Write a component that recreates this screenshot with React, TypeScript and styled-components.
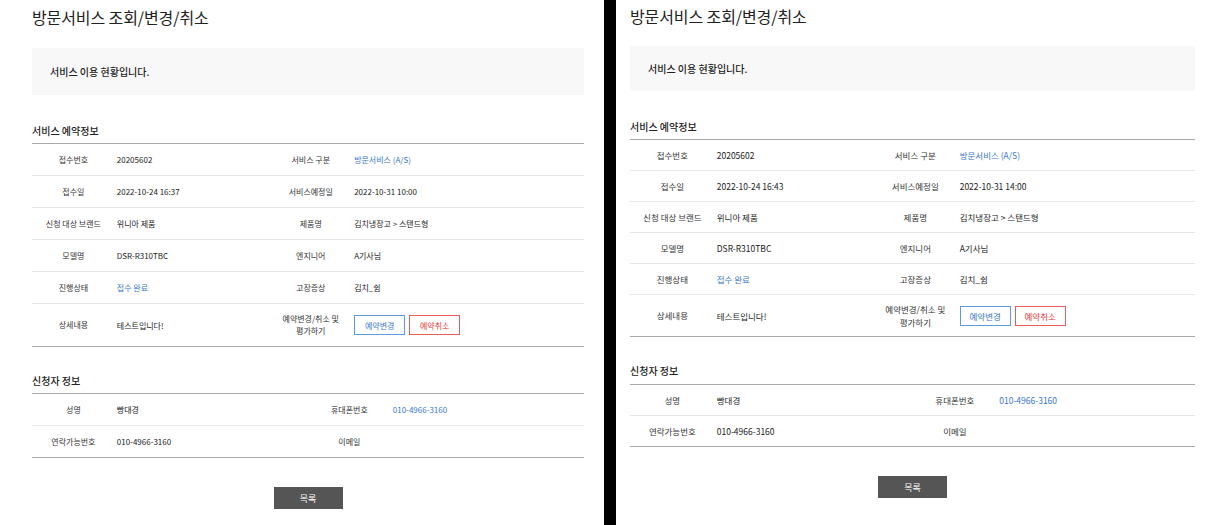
import styled, { createGlobalStyle } from 'styled-components';

const GlobalStyle = createGlobalStyle`
  html, body {
    margin: 0;
    padding: 0;
    background: #fff;
  }
  body {
    font-family: 'Noto Sans CJK KR', 'Noto Sans', sans-serif;
    color: #222;
  }
`;

type Metrics = {
	padL: number;
	padR: number;
	titleH: number;
	noticeTop: number;
	noticeH: number;
	headTop: number;
	headGap: number;
	rowH: number;
	tallH: number;
	head2Top: number;
	head2Gap: number;
	btnTop: number;
	fs: number;
};

const Screen = styled.div`
	display: flex;
	width: 1221px;
	height: 525px;
	overflow: hidden;
`;

const Divider = styled.div`
	width: 12px;
	background: #000;
	flex-shrink: 0;
`;

const Panel = styled.section<{ $w: number; $m: Metrics }>`
	width: ${(p) => p.$w}px;
	flex-shrink: 0;
	padding: 0 ${(p) => p.$m.padR}px 0 ${(p) => p.$m.padL}px;
	box-sizing: border-box;
	display: flex;
	flex-direction: column;
`;

const Title = styled.h2<{ $m: Metrics }>`
	margin: 0;
	height: ${(p) => p.$m.titleH}px;
	line-height: ${(p) => p.$m.titleH}px;
	font-size: 16px;
	font-weight: 400;
	color: #222;
	letter-spacing: -0.1px;
`;

const Notice = styled.div<{ $m: Metrics }>`
	margin-top: ${(p) => p.$m.noticeTop}px;
	height: ${(p) => p.$m.noticeH}px;
	background: #f8f8f8;
	display: flex;
	align-items: center;
	padding-left: 18px;
	font-size: 10px;
	font-weight: 500;
	color: #222;
`;

const SectionHead = styled.h3<{ $top: number; $gap: number }>`
	margin: ${(p) => p.$top}px 0 ${(p) => p.$gap}px;
	height: 16px;
	line-height: 16px;
	font-size: 10px;
	font-weight: 500;
	color: #222;
`;

const Table = styled.div`
	border-top: 1px solid #a8a8a8;
	border-bottom: 1px solid #a8a8a8;
`;

const Row = styled.div<{ $cols: string; $h: number }>`
	display: grid;
	grid-template-columns: ${(p) => p.$cols};
	height: ${(p) => p.$h}px;
	align-items: center;

	& + & {
		border-top: 1px solid #e6e6e6;
	}
`;

const Label = styled.div<{ $fs: number }>`
	text-align: center;
	font-size: ${(p) => p.$fs}px;
	line-height: 1.45;
	color: #333;
	padding: 0 4px;
`;

const Value = styled.div<{ $fs: number; $link?: boolean }>`
	padding-left: 2px;
	font-size: ${(p) => p.$fs}px;
	color: ${(p) => (p.$link ? '#3a78c9' : '#222')};
	display: flex;
	gap: 4px;
	align-items: center;
`;

const LineButton = styled.button<{ $tone: 'blue' | 'red'; $fs: number }>`
	width: 51px;
	height: 20px;
	padding: 0;
	background: #fff;
	border: 1px solid ${(p) => (p.$tone === 'blue' ? '#5d9be0' : '#ec5a5a')};
	color: ${(p) => (p.$tone === 'blue' ? '#3a78c9' : '#e23a3a')};
	font-family: inherit;
	font-size: ${(p) => p.$fs}px;
	cursor: pointer;
`;

const Footer = styled.div<{ $top: number }>`
	margin-top: ${(p) => p.$top}px;
	display: flex;
	justify-content: center;
`;

const ListButton = styled.button`
	width: 69px;
	height: 22px;
	padding: 0;
	border: none;
	background: #555;
	color: #fff;
	font-family: inherit;
	font-size: 9px;
	cursor: pointer;
`;

type Cell = { label: string; value?: string; link?: boolean; actions?: boolean };

type PageData = {
	receivedAt: string;
	scheduledAt: string;
};

const RESERVE_COLS = '15% 28% 15% 42%';
const APPLICANT_COLS = '15% 35% 15% 35%';

const ServicePage = ({ width, m, data }: { width: number; m: Metrics; data: PageData }) => {
	const reserve: [Cell, Cell][] = [
		[
			{ label: '접수번호', value: '20205602' },
			{ label: '서비스 구분', value: '방문서비스 (A/S)', link: true },
		],
		[
			{ label: '접수일', value: data.receivedAt },
			{ label: '서비스예정일', value: data.scheduledAt },
		],
		[
			{ label: '신청 대상 브랜드', value: '위니아 제품' },
			{ label: '제품명', value: '김치냉장고 > 스탠드형' },
		],
		[
			{ label: '모델명', value: 'DSR-R310TBC' },
			{ label: '엔지니어', value: 'A기사님' },
		],
		[
			{ label: '진행상태', value: '접수 완료', link: true },
			{ label: '고장증상', value: '김치_쉼' },
		],
		[
			{ label: '상세내용', value: '테스트입니다!' },
			{ label: '예약변경/취소 및 평가하기', actions: true },
		],
	];

	const applicant: [Cell, Cell][] = [
		[
			{ label: '성명', value: '빵대경' },
			{ label: '휴대폰번호', value: '010-4966-3160', link: true },
		],
		[
			{ label: '연락가능번호', value: '010-4966-3160' },
			{ label: '이메일', value: '' },
		],
	];

	const renderCell = (c: Cell, key: string) => [
		<Label key={key + 'l'} $fs={m.fs}>
			{c.label === '예약변경/취소 및 평가하기' ? (
				<>
					예약변경/취소 및
					<br />
					평가하기
				</>
			) : (
				c.label
			)}
		</Label>,
		<Value key={key + 'v'} $fs={m.fs} $link={c.link}>
			{c.actions ? (
				<>
					<LineButton $tone='blue' $fs={m.fs}>
						예약변경
					</LineButton>
					<LineButton $tone='red' $fs={m.fs}>
						예약취소
					</LineButton>
				</>
			) : (
				c.value
			)}
		</Value>,
	];

	return (
		<Panel $w={width} $m={m}>
			<Title $m={m}>방문서비스 조회/변경/취소</Title>
			<Notice $m={m}>서비스 이용 현황입니다.</Notice>

			<SectionHead $top={m.headTop} $gap={m.headGap}>
				서비스 예약정보
			</SectionHead>
			<Table>
				{reserve.map((pair, i) => (
					<Row key={i} $cols={RESERVE_COLS} $h={i === reserve.length - 1 ? m.tallH : m.rowH}>
						{renderCell(pair[0], `a${i}`)}
						{renderCell(pair[1], `b${i}`)}
					</Row>
				))}
			</Table>

			<SectionHead $top={m.head2Top} $gap={m.head2Gap}>
				신청자 정보
			</SectionHead>
			<Table>
				{applicant.map((pair, i) => (
					<Row key={i} $cols={APPLICANT_COLS} $h={m.rowH}>
						{renderCell(pair[0], `a${i}`)}
						{renderCell(pair[1], `b${i}`)}
					</Row>
				))}
			</Table>

			<Footer $top={m.btnTop}>
				<ListButton>목록</ListButton>
			</Footer>
		</Panel>
	);
};

const leftMetrics: Metrics = {
	padL: 32,
	padR: 20,
	titleH: 34,
	noticeTop: 14,
	noticeH: 47,
	headTop: 28,
	headGap: 4,
	rowH: 31,
	tallH: 42,
	head2Top: 26,
	head2Gap: 4,
	btnTop: 29,
	fs: 8,
};

const rightMetrics: Metrics = {
	padL: 14,
	padR: 26,
	titleH: 32,
	noticeTop: 14,
	noticeH: 45,
	headTop: 28,
	headGap: 4,
	rowH: 30,
	tallH: 41,
	head2Top: 26,
	head2Gap: 5,
	btnTop: 29,
	fs: 8.5,
};

const App = () => {
	return (
		<>
			<GlobalStyle />
			<Screen>
				<ServicePage
					width={604}
					m={leftMetrics}
					data={{ receivedAt: '2022-10-24 16:37', scheduledAt: '2022-10-31 10:00' }}
				/>
				<Divider />
				<ServicePage
					width={605}
					m={rightMetrics}
					data={{ receivedAt: '2022-10-24 16:43', scheduledAt: '2022-10-31 14:00' }}
				/>
			</Screen>
		</>
	);
};

export default App;
